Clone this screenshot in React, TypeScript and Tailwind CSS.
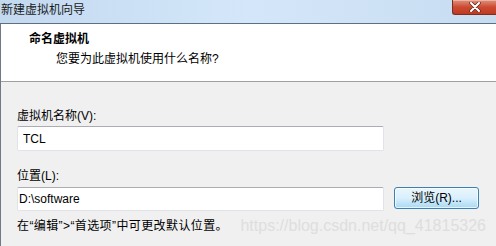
export default function App() {
  const font = { fontFamily: '"Liberation Sans", "Noto Sans CJK SC", sans-serif' };

  return (
    <div
      className="relative w-[496px] h-[246px] overflow-hidden flex flex-col bg-[#f0f0f0] text-[12px] text-black"
      style={font}
    >
      {/* title bar */}
      <div className="h-[23px] shrink-0 flex items-start justify-between bg-gradient-to-r from-[#c3d9f0] via-[#d4e7fa] to-[#c8dcf1]">
        <div className="pt-[2px] pl-[1px] text-[12px] leading-[17px] text-[#1a1a1a]">新建虚拟机向导</div>
        <div className="w-[44px] h-[15px] rounded-bl-[3px] border-l border-b border-[#7e2c20] bg-gradient-to-b from-[#df8f7b] via-[#cc4a33] to-[#c03820] flex items-center justify-center shadow-[inset_0_1px_0_rgba(255,255,255,0.35)]">
          <svg width="12" height="10" viewBox="0 0 12 10">
            <path d="M2 1 L10 9 M10 1 L2 9" stroke="#5a2a20" strokeWidth="3.4" strokeLinecap="round" />
            <path d="M2 1 L10 9 M10 1 L2 9" stroke="#ffffff" strokeWidth="2" strokeLinecap="round" />
          </svg>
        </div>
      </div>
      <div className="h-px shrink-0 bg-[#5d6f80]" />

      <div className="flex-1 flex flex-col border-l border-[#6f7a86]">
        {/* header */}
        <div className="h-[58px] shrink-0 bg-white border-b border-[#a0a0a0] pt-[6px]">
          <div className="pl-[28px] font-bold leading-[18px]">命名虚拟机</div>
          <div className="pl-[55px] leading-[18px] mt-[2px]">您要为此虚拟机使用什么名称?</div>
        </div>

        {/* body */}
        <div className="flex-1 pl-[16px] pt-[26px]">
          <div className="leading-[17px]">虚拟机名称(V):</div>
          <div className="mt-[1px] w-[367px] h-[25px] rounded-[2px] bg-white border border-[#e2e3ea] border-t-[#abadb3] flex items-center pl-[5px]">
            TCL
          </div>

          <div className="mt-[17px] leading-[17px]">位置(L):</div>
          <div className="mt-[2px] flex items-start">
            <div className="w-[367px] h-[24px] rounded-[2px] bg-white border border-[#e2e3ea] border-t-[#abadb3] flex items-center pl-[1px]">
              D:\software
            </div>
            <button className="ml-[10px] w-[85px] h-[22px] rounded-[3px] border border-[#3c7fb1] bg-gradient-to-b from-[#eaf6fd] via-[#d9f0fc] to-[#a7d9f5] shadow-[inset_0_0_0_1px_rgba(255,255,255,0.7)] flex items-center justify-center leading-none">
              浏览(R)...
            </button>
          </div>

          <div className="mt-[7px] leading-[17px] tracking-[0.4px]">在“编辑”&gt;“首选项”中可更改默认位置。</div>
        </div>
      </div>

      {/* watermark */}
      <div
        className="absolute right-[10px] top-[217px] text-[16px] leading-[18px] text-[#dedede]"
        style={{ fontFamily: '"Liberation Sans", sans-serif' }}
      >
        https://blog.csdn.net/qq_41815326
      </div>
    </div>
  );
}
